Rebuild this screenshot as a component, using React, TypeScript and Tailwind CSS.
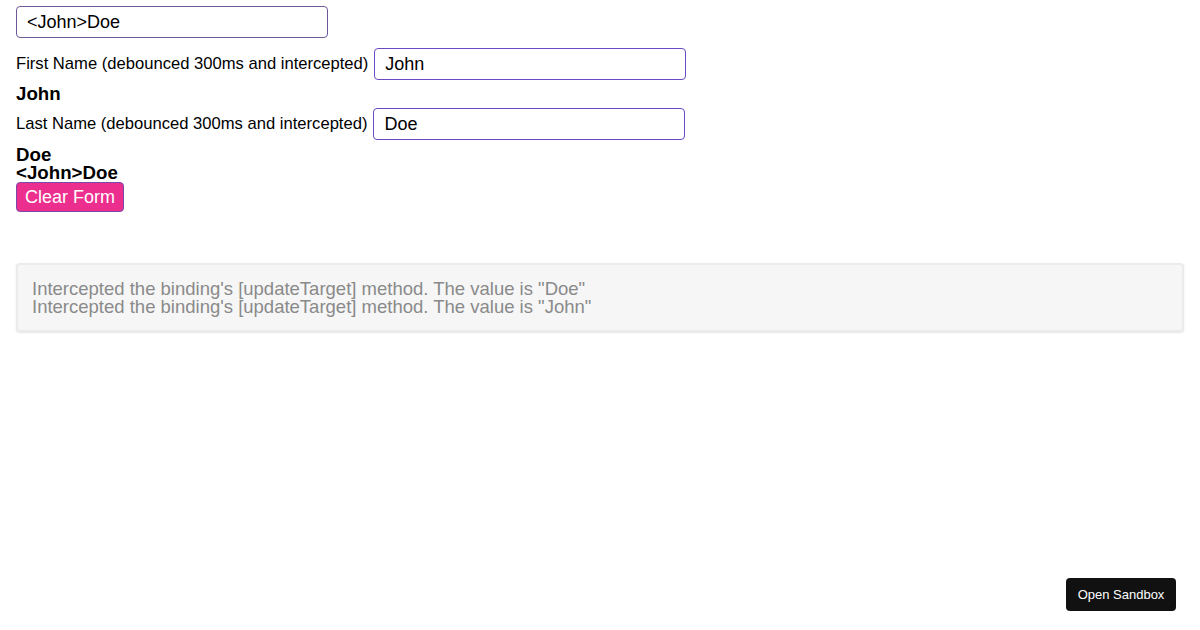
import React, { useState } from 'react';

export default function App() {
  const [first, setFirst] = useState('John');
  const [last, setLast] = useState('Doe');
  const full = `<${first}>${last}`;

  const logs = [
    `Intercepted the binding's [updateTarget] method. The value is "${last}"`,
    `Intercepted the binding's [updateTarget] method. The value is "${first}"`,
  ];

  return (
    <div className="min-h-[630px] bg-white px-4 pt-[6px] text-black" style={{ fontFamily: '"Liberation Sans", Arial, sans-serif' }}>
      <input
        type="text"
        value={full}
        readOnly
        className="block h-[32px] w-[312px] rounded-[4px] border border-[#6e5a99] px-[10px] text-[18px] outline-none"
      />

      <div className="mt-[10px] flex items-center">
        <label className="text-[16.6px]">First Name (debounced 300ms and intercepted)</label>
        <input
          type="text"
          value={first}
          onChange={(e) => setFirst(e.target.value)}
          className="ml-[6px] h-[32px] w-[312px] rounded-[4px] border border-[#6a4bc4] px-[10px] text-[18px] outline-none"
        />
      </div>
      <div className="mt-[3px] text-[18.7px] font-bold leading-[22px]">{first}</div>

      <div className="mt-[3px] flex items-center">
        <label className="text-[16.6px]">Last Name (debounced 300ms and intercepted)</label>
        <input
          type="text"
          value={last}
          onChange={(e) => setLast(e.target.value)}
          className="ml-[6px] h-[32px] w-[312px] rounded-[4px] border border-[#6a4bc4] px-[10px] text-[18px] outline-none"
        />
      </div>
      <div className="mt-[6px] text-[18.7px] font-bold leading-[18px]">{last}</div>
      <div className="text-[18.7px] font-bold leading-[18px]">{full}</div>

      <button
        type="button"
        onClick={() => {
          setFirst('');
          setLast('');
        }}
        className="h-[30px] w-[108px] rounded-[4px] border border-[#7a4aa8] bg-[#ec2f8e] text-[18px] leading-none text-white"
      >
        Clear Form
      </button>

      <div className="mt-[51px] rounded-[4px] border-2 border-[#ebebeb] bg-[#f6f6f6] px-[14px] pb-[14px] pt-[15px] text-[18.5px] leading-[18px] text-[#8a8a8a] shadow-[0_1px_2px_rgba(0,0,0,0.1)]">
        {logs.map((l, i) => (
          <div key={i}>{l}</div>
        ))}
      </div>

      <button
        type="button"
        className="absolute bottom-[19px] right-[24px] h-[33px] w-[110px] rounded-[4px] bg-[#111111] text-[13px] text-white"
      >
        Open Sandbox
      </button>
    </div>
  );
}
